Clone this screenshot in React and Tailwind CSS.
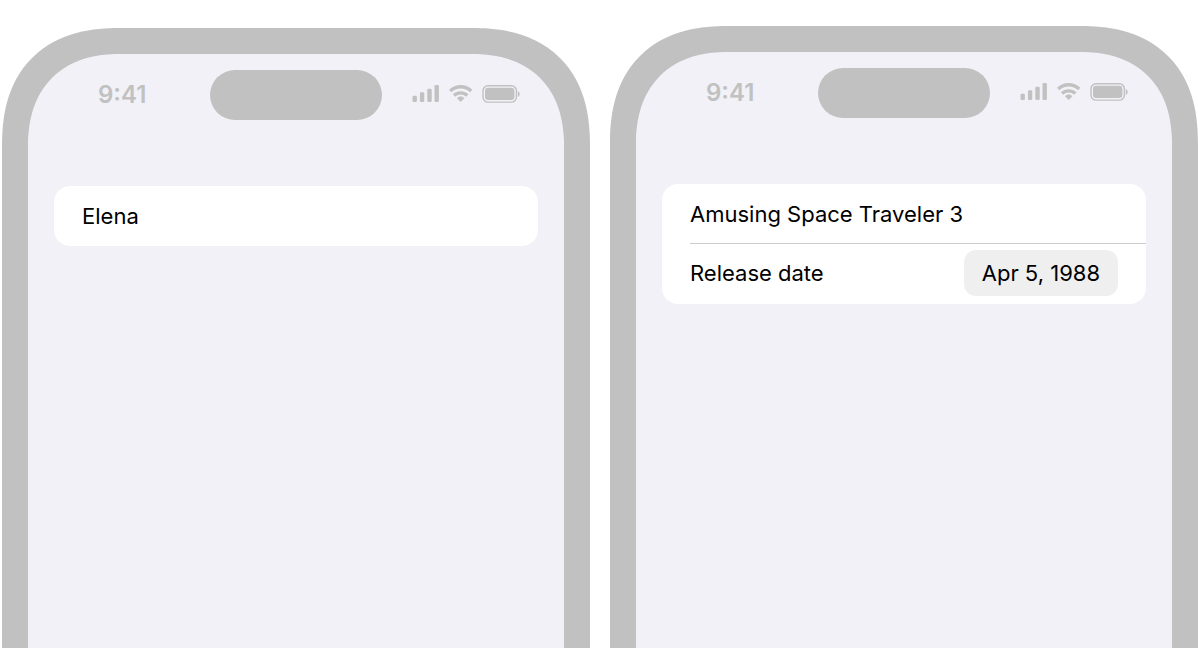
import { useState } from "react";

function SignalIcon() {
  return (
    <svg width="28" height="18" viewBox="0 0 28 18" fill="currentColor" aria-hidden="true">
      <rect x="0.5" y="10.7" width="4.4" height="6.3" rx="1.3" />
      <rect x="7.9" y="7.2" width="4.4" height="9.8" rx="1.3" />
      <rect x="15.3" y="3.7" width="4.4" height="13.3" rx="1.3" />
      <rect x="22.5" y="0" width="4.4" height="17" rx="1.3" />
    </svg>
  );
}

function WifiIcon() {
  return (
    <svg width="24" height="18" viewBox="0 0 24 18" fill="none" stroke="currentColor" aria-hidden="true">
      <path d="M1.2 6A15.2 15.2 0 0 1 22.2 6" strokeWidth="3.5" />
      <path d="M5.05 10.5A9.6 9.6 0 0 1 18.35 10.5" strokeWidth="3.3" />
      <path d="M11.7 16.8L8.2 13.2A5.2 5.2 0 0 1 15.2 13.2Z" fill="currentColor" strokeWidth="0.4" strokeLinejoin="round" />
    </svg>
  );
}

function BatteryIcon() {
  return (
    <svg width="38" height="18" viewBox="0 0 38 18" fill="currentColor" aria-hidden="true">
      <rect x="1" y="0.7" width="33.4" height="16.4" rx="5" fill="none" stroke="currentColor" strokeWidth="1.4" />
      <rect x="3" y="2.7" width="29.4" height="12.4" rx="3.3" />
      <path d="M35.8 6V11.8C37 11.3 37.7 10.2 37.7 8.9C37.7 7.6 37 6.5 35.8 6Z" />
    </svg>
  );
}

function Phone({ children }) {
  return (
    <section className="flex-1 min-w-0 bg-[#f2f1f7] border-[26px] border-b-0 border-[#c1c1c1] rounded-t-[118px] [corner-shape:superellipse(1.24)]">
      <div className="grid grid-cols-[1fr_172px_1fr] items-center pt-4 text-[#c1c1c1]">
        <time className="pl-[70px] text-[24px] leading-7 font-semibold">9:41</time>
        <div className="h-[50px] rounded-full bg-[#c1c1c1]" />
        <div className="flex justify-end items-center gap-[9px] pr-[44px] pb-0.5">
          <SignalIcon />
          <WifiIcon />
          <BatteryIcon />
        </div>
      </div>
      <form className="mx-[26px] mt-[66px] bg-white rounded-2xl">{children}</form>
    </section>
  );
}

export default function App() {
  const [name, setName] = useState("Elena");
  const [title, setTitle] = useState("Amusing Space Traveler 3");

  return (
    <main className="flex gap-5 min-h-screen pl-0.5 pt-[26px] bg-white text-black text-[22px] leading-7 font-['Inter',sans-serif]">
      <div className="flex flex-1 min-w-0 pt-0.5">
        <Phone>
          <div className="flex items-center h-[60px] px-7">
            <input
              type="text"
              aria-label="Name"
              value={name}
              onChange={(e) => setName(e.target.value)}
              className="w-full outline-none"
            />
          </div>
        </Phone>
      </div>

      <div className="flex flex-1 min-w-0">
        <Phone>
          <div className="flex items-center h-[60px] ml-7 pr-7 border-b border-[#cdcdcf]">
            <input
              type="text"
              aria-label="Title"
              value={title}
              onChange={(e) => setTitle(e.target.value)}
              className="w-full outline-none"
            />
          </div>
          <div className="flex items-center justify-between h-[60px] px-7 pb-0.5">
            <label htmlFor="release">Release date</label>
            <button type="button" id="release" className="h-[46px] px-[18px] rounded-xl bg-[#efefef]">
              Apr 5, 1988
            </button>
          </div>
        </Phone>
      </div>
    </main>
  );
}
